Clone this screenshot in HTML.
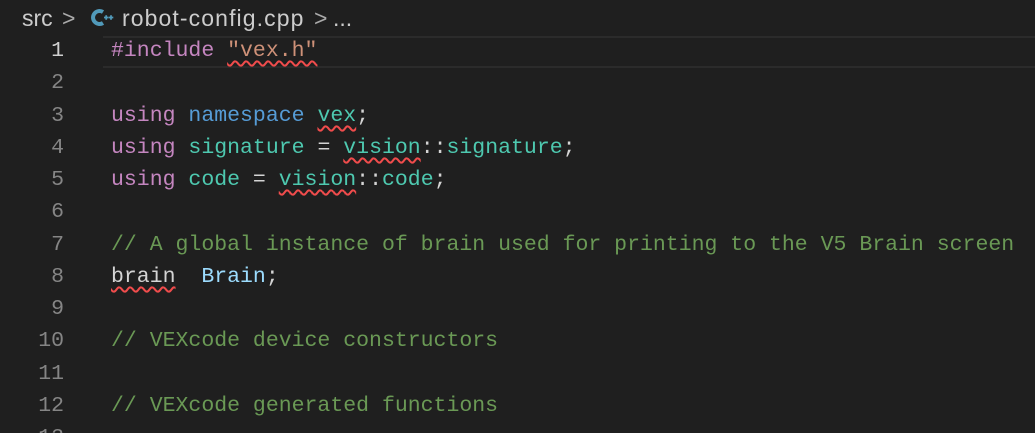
<!DOCTYPE html>
<html><head><style>
html,body{margin:0;padding:0;background:#1f1f1f;width:1035px;height:433px;overflow:hidden;position:relative}
.bc{position:absolute;top:4px;font-family:"Liberation Sans",sans-serif;font-size:23px;color:#cccccc;white-space:pre;line-height:28px}
.cur{position:absolute;left:103px;right:0;top:36px;height:28px;border-top:2px solid #2b2b2b;border-bottom:2px solid #2b2b2b}
.ln{position:absolute;left:0;width:64px;text-align:right;font-family:"Liberation Mono",monospace;font-size:21.5px;color:#858585;line-height:32px}
.cd{position:absolute;left:111px;font-family:"Liberation Mono",monospace;font-size:21.5px;color:#d4d4d4;line-height:32px;white-space:pre}
.k{color:#c586c0}.b{color:#569cd6}.t{color:#4ec9b0}.s{color:#ce9178}.c{color:#6a9955}.v{color:#9cdcfe}
.sq{text-decoration:underline wavy #f14c4c;text-decoration-thickness:1.5px;text-underline-offset:4px}
</style></head><body>
<div class="bc" style="left:22px">src</div>
<div class="bc" style="left:62px;color:#aaa">&gt;</div>
<svg style="position:absolute;left:91px;top:7px" width="24" height="22" viewBox="0 0 24 22"><path d="M12 5 A6.5 6.5 0 1 0 12 16" fill="none" stroke="#519aba" stroke-width="4"/><path d="M13 10.5h4.5M15.2 8.3v4.4M17.8 10.5h4.5M20 8.3v4.4" stroke="#519aba" stroke-width="1.8"/></svg>
<div class="bc" style="left:122px;letter-spacing:1.1px">robot-config.cpp</div>
<div class="bc" style="left:314px;color:#aaa">&gt;</div>
<div class="bc" style="left:333px">...</div>
<div class="cur"></div>
<div class="ln" style="top:35px;color:#d0d0d0">1</div>
<div class="ln" style="top:67px">2</div>
<div class="ln" style="top:100px">3</div>
<div class="ln" style="top:132px">4</div>
<div class="ln" style="top:164px">5</div>
<div class="ln" style="top:196px">6</div>
<div class="ln" style="top:229px">7</div>
<div class="ln" style="top:261px">8</div>
<div class="ln" style="top:293px">9</div>
<div class="ln" style="top:325px">10</div>
<div class="ln" style="top:358px">11</div>
<div class="ln" style="top:390px">12</div>
<div class="ln" style="top:422px">13</div>
<div class="cd" style="top:35px"><span class="k">#include</span> <span class="s sq">"vex.h"</span></div>
<div class="cd" style="top:100px"><span class="k">using</span> <span class="b">namespace</span> <span class="t sq">vex</span>;</div>
<div class="cd" style="top:132px"><span class="k">using</span> <span class="t">signature</span> = <span class="t sq">vision</span>::<span class="t">signature</span>;</div>
<div class="cd" style="top:164px"><span class="k">using</span> <span class="t">code</span> = <span class="t sq">vision</span>::<span class="t">code</span>;</div>
<div class="cd" style="top:229px"><span class="c">// A global instance of brain used for printing to the V5 Brain screen</span></div>
<div class="cd" style="top:261px"><span class="sq">brain</span>  <span class="v">Brain</span>;</div>
<div class="cd" style="top:325px"><span class="c">// VEXcode device constructors</span></div>
<div class="cd" style="top:390px"><span class="c">// VEXcode generated functions</span></div>
</body></html>
